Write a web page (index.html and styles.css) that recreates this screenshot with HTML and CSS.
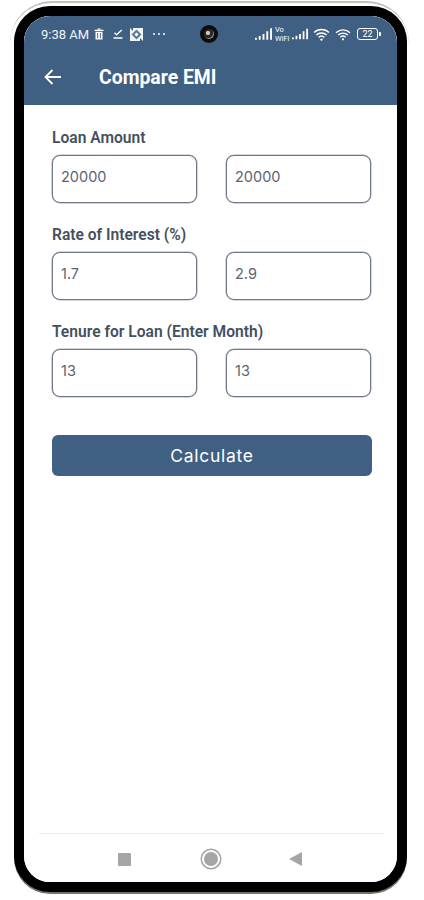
FILE: index.html
```
<!DOCTYPE html>
<html lang="en">
<head>
<meta charset="utf-8">
<title>Compare EMI</title>
<link rel="stylesheet" href="styles.css">
</head>
<body>
<div class="phone">
  <div class="screen">
    <header class="appbar">
      <div class="status">
        <div class="status-left">
          <span class="time">9:38 AM</span>
          <svg class="ic ic-trash" width="10" height="12" viewBox="0 0 10 12"><path fill="#fff" d="M.5 1.800h9v1.200h-9zM3.500.6h3v1h-3zM1.500 3.800h7v7.700h-7zM3.200 5v5.300h.9V5zm2.700 0v5.300h.9V5z"/></svg>
          <svg class="ic ic-check" width="10" height="12" viewBox="0 0 10 12"><path fill="none" stroke="#fff" stroke-width="1.300" d="M1.500 4.800l2 2L8.800 2"/><path stroke="#fff" stroke-width="1.300" d="M.5 10h9"/></svg>
          <svg class="ic ic-box" width="13" height="13" viewBox="0 0 13 13"><path fill="#f2f4f6" d="M0 0h13v13H0z"/><path fill="#5d7a98" d="M6.500 1.500L11.500 6.500 6.500 11.500 1.500 6.500z"/><path fill="#fff" d="M6.500 4.500L8.500 6.500 6.500 8.500 4.500 6.500z"/><path fill="#3f6083" d="M0 0l3 0 0 3zM13 13l-3 0 0-3z"/></svg>
          <span class="dots">
            <i class="dot"></i><i class="dot"></i><i class="dot"></i>
          </span>
        </div>
        <div class="status-right">
          <svg class="sig1" width="17" height="12" viewBox="0 0 18 12"><path fill="#fff" d="M0 10h2v2H0zM4 8h2v4H4zM8 6h2v6H8zM12 3h2v9h-2zM16 0h2v12h-2z"/></svg>
          <span class="vowifi">Vo<br>WiFi</span>
          <svg class="sig2" width="16" height="12" viewBox="0 0 18 12"><path fill="#fff" d="M0 10h2v2H0zM4 8h2v4H4zM8 6h2v6H8zM12 3h2v9h-2zM16 0h2v12h-2z"/></svg>
          <svg class="wifi" width="17" height="13" viewBox="0 0 16 12"><g fill="none" stroke="#fff" stroke-width="1.300"><path d="M1 4.200a10 10 0 0 1 14 0"/><path d="M3.200 6.500a7 7 0 0 1 9.600 0"/><path d="M5.300 8.700a4 4 0 0 1 5.400 0"/></g><circle cx="8" cy="10.800" r="1.100" fill="#fff"/></svg>
          <svg class="wifi" width="16" height="13" viewBox="0 0 16 12"><g fill="none" stroke="#fff" stroke-width="1.300"><path d="M1 4.200a10 10 0 0 1 14 0"/><path d="M3.200 6.500a7 7 0 0 1 9.600 0"/><path d="M5.300 8.700a4 4 0 0 1 5.400 0"/></g><circle cx="8" cy="10.800" r="1.100" fill="#fff"/></svg>
          <span class="battery"><span class="batt-body">22</span><span class="batt-tip"></span></span>
        </div>
      </div>
      <div class="titlebar">
        <svg class="back" width="20" height="18" viewBox="0 0 20 18"><path fill="none" stroke="#fff" stroke-width="1.800" d="M18 9H2.500M9.500 2L2.500 9l7 7"/></svg>
        <h1 class="title">Compare EMI</h1>
      </div>
      <div class="camera"><span class="lens"></span></div>
    </header>
    <main class="form">
      <section class="group">
        <label class="label">Loan Amount</label>
        <div class="pair">
          <div class="field">20000</div>
          <div class="field">20000</div>
        </div>
      </section>
      <section class="group">
        <label class="label">Rate of Interest (%)</label>
        <div class="pair">
          <div class="field">1.7</div>
          <div class="field">2.9</div>
        </div>
      </section>
      <section class="group">
        <label class="label">Tenure for Loan (Enter Month)</label>
        <div class="pair">
          <div class="field">13</div>
          <div class="field">13</div>
        </div>
      </section>
      <button class="calc">Calculate</button>
    </main>
    <nav class="navbar">
      <span class="nav-square"></span>
      <span class="nav-circle"></span>
      <span class="nav-back"></span>
    </nav>
  </div>
</div>
</body>
</html>
```
FILE: styles.css
```
* { box-sizing: border-box; }
html, body { margin: 0; padding: 0; background: #fff; }
body { width: 424px; height: 900px; overflow: hidden; padding: 6px 0 0 14px; }

.phone {
  position: relative;
  width: 393px;
  height: 886px;
  border: 10px solid #000;
  border-radius: 36px;
  box-shadow: 0 2px 0 #77736b;
  background: #fff;
}
.phone::before {
  content: "";
  position: absolute;
  left: -14px;
  right: -12px;
  top: -15px;
  height: 44px;
  border-top: 2px solid #c4c1b9;
  border-radius: 42px 42px 0 0;
}
.screen {
  height: 100%;
  border-radius: 26px;
  overflow: hidden;
  display: flex;
  flex-direction: column;
  background: #fff;
}

.appbar {
  position: relative;
  height: 89px;
  flex: none;
  background: #3f6083;
  color: #fff;
  font-family: Roboto, "Liberation Sans", sans-serif;
}
.status {
  display: flex;
  justify-content: space-between;
  align-items: center;
  height: 18px;
  padding: 9px 16px 0 17px;
  box-sizing: content-box;
}
.status-left { display: flex; align-items: center; }
.time { font-size: 13px; color: #f1f4f7; width: 53px; }
.ic-check { margin-left: 9px; }
.ic-box { margin-left: 7px; }
.dots { display: flex; gap: 3px; margin-left: 10px; }
.dot { width: 2px; height: 2px; border-radius: 50%; background: #fff; }
.status-right { display: flex; align-items: center; }
.vowifi { font-size: 7.500px; line-height: 9px; width: 14px; margin: 0 3px; }
.wifi { margin-left: 5px; }
.battery { display: flex; align-items: center; margin-left: 6px; }
.batt-body {
  width: 21px;
  height: 12px;
  border: 1px solid #fff;
  border-radius: 3px;
  font-size: 9px;
  line-height: 10px;
  text-align: center;
}
.batt-tip { width: 2px; height: 4px; background: #fff; border-radius: 0 1px 1px 0; margin-left: 1px; }

.titlebar {
  display: flex;
  align-items: center;
  padding: 21px 0 0 19px;
}
.back { flex: none; }
.title {
  margin: 2px 0 0 36px;
  font-size: 19.400px;
  line-height: 24px;
  font-weight: 700;
  color: #fff;
}
.camera {
  position: absolute;
  left: 176px;
  top: 9px;
  width: 18px;
  height: 18px;
  border-radius: 50%;
  background: #0c0c0c;
  display: flex;
  align-items: center;
  justify-content: center;
}
.lens {
  width: 10px;
  height: 10px;
  border-radius: 50%;
  background: radial-gradient(circle at 40% 40%, #c9c9c9 0 20%, #2a2a2a 30% 55%, #8e8e8e 65%);
}

.form {
  flex: 1;
  padding: 22px 25px 0 28px;
  font-family: Roboto, "Liberation Sans", sans-serif;
}
.group { margin-bottom: 21px; }
.label {
  display: block;
  font-size: 15.600px;
  line-height: 22px;
  font-weight: 600;
  color: #45505f;
  margin-bottom: 6px;
}
.pair { display: flex; gap: 29px; }
.field {
  width: 145px;
  height: 48px;
  border: 1px solid #6f7787;
  box-shadow: 0 0 0 .5px rgba(111, 119, 135, .6);
  border-radius: 8px;
  background: #fff;
  padding: 0 8px 6px;
  display: flex;
  align-items: center;
  font-family: Inter, "Open Sans", sans-serif;
  font-size: 14.500px;
  color: #5b6472;
}
.calc {
  display: block;
  width: 320px;
  height: 41px;
  margin-top: 38px;
  border: 0;
  border-radius: 6px;
  background: #3f6083;
  color: #fff;
  font-family: Inter, "Open Sans", sans-serif;
  font-size: 17.500px;
  letter-spacing: .7px;
}

.navbar {
  flex: none;
  height: 49px;
  margin: 0 13px 0 15px;
  border-top: 1px solid #eeeeee;
  display: flex;
  align-items: center;
  padding: 2px 0 0 79px;
}
.nav-square { width: 13px; height: 13px; background: #a5a5a5; border-radius: 1px; }
.nav-circle {
  width: 18px;
  height: 18px;
  margin-left: 71px;
  border-radius: 50%;
  background: #a5a5a5;
  border: 2px solid #fff;
  box-shadow: 0 0 0 1.500px #a5a5a5;
}
.nav-back {
  width: 0;
  height: 0;
  margin-left: 69px;
  border-style: solid;
  border-width: 7.500px 13px 7.500px 0;
  border-color: transparent #a5a5a5 transparent transparent;
}
```
